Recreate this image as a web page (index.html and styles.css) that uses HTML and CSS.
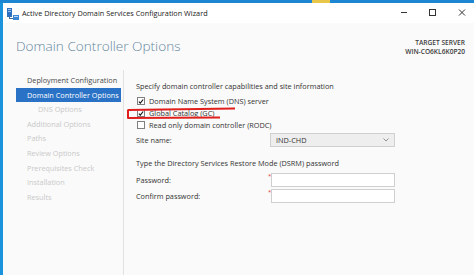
FILE: index.html
```html
<!DOCTYPE html>
<html lang="en">
<head>
  <meta charset="UTF-8">
  <title>Active Directory Domain Services Configuration Wizard</title>
  <link rel="stylesheet" href="styles.css">
</head>
<body>

  <div class="desktop"></div>

  <div class="window">
    <div class="titlebar">
      <svg class="app-icon" width="12" height="12" viewBox="0 0 12 12">
        <rect x="0" y="0" width="5" height="9" fill="#2d6fc0"/>
        <rect x="1" y="1" width="3" height="1" fill="#9cc4ee"/>
        <rect x="1" y="3" width="3" height="1" fill="#9cc4ee"/>
        <rect x="2" y="9" width="1" height="2" fill="#4a6a8a"/>
        <rect x="2" y="10" width="9" height="1" fill="#4a6a8a"/>
        <rect x="6" y="7" width="6" height="5" fill="#3a86d4"/>
        <rect x="7" y="8" width="4" height="1" fill="#b5d6f5"/>
      </svg>
      <span class="title">Active Directory Domain Services Configuration Wizard</span>
      <div class="controls">
        <svg width="72" height="20" viewBox="0 0 72 20">
          <path d="M3 9.5h6" stroke="#333" stroke-width="1"/>
          <rect x="31.5" y="6.5" width="6" height="6" fill="none" stroke="#333" stroke-width="1"/>
          <path d="M61 6.5l6 6M67 6.5l-6 6" stroke="#333" stroke-width="1"/>
        </svg>
      </div>
    </div>

    <div class="header">
      <h1>Domain Controller Options</h1>
      <div class="target">
        <div>TARGET SERVER</div>
        <div>WIN-CO6KL6K0P20</div>
      </div>
    </div>

    <div class="main">
      <nav class="steps">
        <div class="step">Deployment Configuration</div>
        <div class="step active">Domain Controller Options</div>
        <div class="step sub off">DNS Options</div>
        <div class="step off">Additional Options</div>
        <div class="step off">Paths</div>
        <div class="step off">Review Options</div>
        <div class="step off">Prerequisites Check</div>
        <div class="step off">Installation</div>
        <div class="step off">Results</div>
      </nav>

      <section class="page">
        <p class="intro">Specify domain controller capabilities and site information</p>
        <div class="checks">
          <label class="check"><span class="box on"><svg width="7" height="7" viewBox="0 0 7 7"><path d="M1 3.6l1.7 1.8L6 1.2" fill="none" stroke="#111" stroke-width="1.3"/></svg></span>Domain Name System (DNS) server</label>
          <label class="check"><span class="box on"><svg width="7" height="7" viewBox="0 0 7 7"><path d="M1 3.6l1.7 1.8L6 1.2" fill="none" stroke="#111" stroke-width="1.3"/></svg></span>Global Catalog (GC)</label>
          <label class="check"><span class="box"></span>Read only domain controller (RODC)</label>
        </div>
        <div class="row">
          <span class="lbl">Site name:</span>
          <span class="req"></span>
          <div class="select">IND-CHD
            <svg width="6" height="4" viewBox="0 0 6 4"><path d="M0.5 0.5l2.5 2.5 2.5-2.5" fill="none" stroke="#888" stroke-width="0.9"/></svg>
          </div>
        </div>
        <p class="intro dsrm">Type the Directory Services Restore Mode (DSRM) password</p>
        <div class="row pw">
          <span class="lbl">Password:</span>
          <span class="req">*</span>
          <div class="input"></div>
        </div>
        <div class="row pw">
          <span class="lbl">Confirm password:</span>
          <span class="req">*</span>
          <div class="input"></div>
        </div>
      </section>
    </div>
  </div>

  <!-- red hand-drawn highlight over the GC option -->
  <svg class="mark" width="474" height="275" viewBox="0 0 474 275">
    <path d="M128 110L235 108.6M128 109.5V118.5M127.5 118L220 117.6" fill="none" stroke="#e1201d" stroke-width="2"/>
  </svg>

</body>
</html>
```

FILE: styles.css
```css
/* reset */
* { margin:0; padding:0; box-sizing:border-box }
html, body { height:100%; }
body {
  background:#1a92dc;
  font-family:"Open Sans", "Noto Sans", sans-serif;
  font-size:7.3px;
  color:#333;
  overflow:hidden;
  position:relative;
}

/* desktop strip with taskbar glint */
.desktop {
  height:3px;
  background:linear-gradient(90deg, #1c86d2 0, #1c86d2 312px, #e8c64a 312px, #e8c64a 330px, #1c86d2 330px);
}

/* wizard window */
.window {
  margin-left:3px;
  height:272px;
  background:#fafafa;
  display:flex; flex-direction:column;
}

.titlebar {
  height:20px;
  background:#fff;
  display:flex; align-items:center;
  padding-left:4px;
}
.app-icon { margin-top:1px; }
.title { margin-left:3px; color:#222; font-size:7.3px; }
.controls { margin-left:auto; margin-right:4px; display:flex; }
.controls svg { display:block; }

/* page header */
.header {
  height:47px;
  display:flex; justify-content:space-between;
  padding:13px 9px 0 13px;
}
.header h1 {
  font-size:13.6px; font-weight:300;
  color:#66889e;
  line-height:20px;
}
.target {
  text-align:right;
  font-size:6.6px; font-weight:600;
  color:#3a3a3a;
  line-height:9px;
  padding-top:2px;
}

/* body: steps + page */
.main { flex:1; display:flex; }

.steps {
  width:121px;
  border-right:1px solid #e2e2e2;
  padding-top:3px;
}
.step {
  height:14.6px; line-height:14px;
  margin:0 2px 0 13px;
  padding-left:11px;
  white-space:nowrap;
  color:#4a4a4a;
}
.step.active { background:#2a72c6; color:#fff; }
.step.sub { padding-left:22px; }
.step.off { color:#c9c9c9; }

.page {
  flex:1;
  padding:10px 12px 0 12px;
}
.intro { line-height:12px; white-space:nowrap; }
.checks { margin-top:3px; }
.check {
  display:flex; align-items:center;
  height:12px;
  white-space:nowrap;
}
.box {
  width:8px; height:8px;
  margin:0 4px 0 1px;
  border:1px solid #808080;
  background:#fff;
  display:flex; align-items:center; justify-content:center;
}
.box svg { display:block; }

.row {
  display:grid;
  grid-template-columns:132px 3px 124px;
  align-items:center;
  margin-top:2px;
  height:14px;
}
.req {
  align-self:start;
  color:#e03a3a;
  font-size:6px; line-height:6px;
}
.select {
  height:14px;
  margin-left:-1px;
  background:#eeeeee;
  border:1px solid #d0d0d0;
  display:flex; align-items:center; justify-content:space-between;
  padding:0 5px 0 5px;
  color:#333;
}
.dsrm { margin-top:10px; }
.row.pw { margin-top:4px; }
.row.pw + .row.pw { margin-top:2px; }
.input {
  height:14px;
  background:#fff;
  border:1px solid #cfcfcf;
}

/* annotation overlay */
.mark {
  position:absolute; top:0; left:0;
  pointer-events:none;
}
```
